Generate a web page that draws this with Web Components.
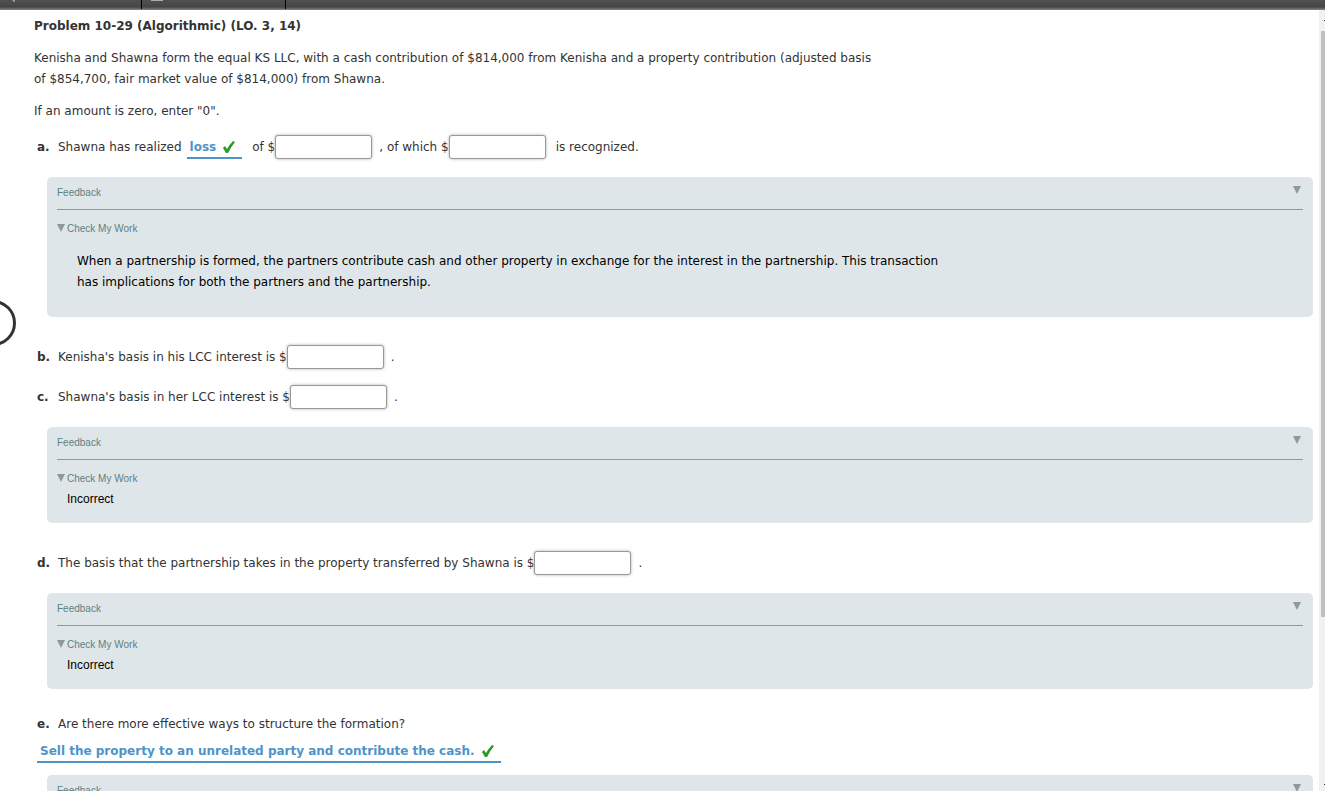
<!DOCTYPE html>
<html lang="en">
<head>
<meta charset="utf-8">
<title>Problem 10-29</title>
<style>
html, body { margin: 0; height: 100%; overflow: hidden; background: #fff; }
</style>
</head>
<body>
<problem-page></problem-page>
<script>
const define = (name, html, setup) => {
  const template = document.createElement('template');
  template.innerHTML = html;
  customElements.define(name, class extends HTMLElement {
    constructor() {
      super();
      this.attachShadow({ mode: 'open' }).append(template.content.cloneNode(true));
    }
    connectedCallback() { if (setup) setup(this, this.shadowRoot); }
  });
};

define('tool-bar', `
<style>
:host { display: flex; height: 10px; background: linear-gradient(#505050 0, #454545 70%, #5c5c5c 80%, #858585 100%); }
div { box-sizing: border-box; height: 9px; border-right: 1px solid #000; }
.first { width: 142px; padding-left: 12px; }
.second { width: 144px; padding-left: 9px; }
svg { display: block; }
</style>
<div class="first"><svg width="4" height="3"><path d="M0 0H3V2H2L0 0" fill="#999"/></svg></div>
<div class="second"><svg width="12" height="1"><path d="M0 0H12V1H0Z" fill="#aaa"/></svg></div>`);

define('scroll-track', `
<style>
:host { display: flex; flex-direction: column; flex: none; width: 6px; background: #f1f1f1; overflow: hidden; }
.cap { height: 21px; flex: none; }
.thumb { height: 75%; margin-left: 2px; background: #c1c1c1; }
.gap { flex: 1; }
svg { display: block; margin-left: auto; }
</style>
<div class="cap"><svg width="1" height="11"><path d="M0 10H1V11H0Z" fill="#333"/></svg></div>
<div class="thumb"></div><div class="gap"></div>
<div><svg width="1" height="7"><path d="M0 0H1V1H0Z" fill="#333"/></svg></div>`);

define('side-handle', `
<style>
:host { position: absolute; left: -30px; top: 300px; }
button { display: block; box-sizing: border-box; width: 46px; height: 46px; padding: 0; border: 3px solid #333; border-radius: 50%; background: #fff; }
</style>
<button type="button" aria-label="Open side panel"></button>`);

define('money-field', `
<style>
:host { display: inline-flex; }
label { display: flex; align-items: center; }
input { box-sizing: border-box; width: 97px; height: 24px; margin: 0; padding: 0 4px; border: 1px solid #999; border-radius: 3px; background: #fff; box-shadow: 0 0 3px #aaa; font: inherit; }
</style>
<label>$<input type="text"></label>`);

define('graded-choice', `
<style>
:host { display: flex; }
button { display: flex; align-items: center; gap: 7px; box-sizing: border-box; height: 24px; margin: 0; padding: 2px 7px 0 3px; border: 0; border-bottom: 2px solid #4f93c9; background: none; color: #4f93c9; font: inherit; font-weight: bold; }
svg { display: block; }
</style>
<button type="button"><slot></slot><svg width="12" height="13" viewBox="0 0 12 13"><path d="M0 7L2 5L4 8Q7 3 10 0L12 1Q8 6 5 12H3Z" fill="#2c9a2c"/></svg></button>`);

define('question-row', `
<style>
:host { display: flex; align-items: center; height: 24px; margin-left: 3px; white-space: pre; }
b { min-width: 21px; }
</style>
<b></b><slot></slot>`, (el, root) => { root.querySelector('b').textContent = el.getAttribute('letter'); });

define('feedback-panel', `
<style>
:host { display: block; margin-left: 13px; padding: 0 10px; border-radius: 5px; background: #dfe6e9; color: #000; font: 12px/20px "Liberation Sans", Arial, sans-serif; }
header { display: flex; justify-content: space-between; box-sizing: border-box; height: 33px; padding-top: 9px; border-bottom: 1px solid #8f999b; }
.title, .check { color: #5f8080; font-size: 10px; line-height: 14px; }
button { display: flex; padding: 0 2px 0 0; border: 0; background: none; height: 8px; }
svg { display: block; }
.check { display: flex; gap: 2px; padding-top: 12px; }
.check button { padding: 0; margin-top: 2px; }
.body { margin-left: 10px; padding: 3px 0 14px; }
:host([wide]) .body { margin-left: 20px; padding: 15px 0 24px; font: 12px/21px "DejaVu Sans", Verdana, sans-serif; }
</style>
<header><span class="title">Feedback</span><button type="button" aria-label="Collapse feedback"><svg width="8" height="8"><path d="M0 0H8L4 8Z" fill="#8f999b"/></svg></button></header>
<div class="check"><button type="button" aria-label="Toggle Check My Work"><svg width="8" height="8"><path d="M0 0H8L4 8Z" fill="#8f999b"/></svg></button><span>Check My Work</span></div>
<div class="body"><slot></slot></div>`);

define('problem-page', `
<style>
:host { display: flex; flex-direction: column; height: 100%; overflow: hidden; position: relative; color: #333; font: 12px/21px "DejaVu Sans", Verdana, sans-serif; }
.view { display: flex; flex: 1; min-height: 0; }
main { flex: 1; min-width: 0; overflow: hidden; padding: 6px 6px 0 34px; }
h1 { margin: 0; font-size: 12px; line-height: 21px; }
p { margin: 11px 0 0; }
tool-bar { flex: none; }
question-row { margin-top: 16px; }
.a { margin-top: 13px; }
feedback-panel { margin-top: 18px; }
feedback-panel + question-row { margin-top: 28px; }
feedback-panel + .last { margin-top: 23px; }
.choice { margin: 3px 0 0 3px; }
.choice + feedback-panel { margin-top: 12px; }
.before { margin-left: 5px; }
.after { margin-left: 7px; }
.gap { margin-left: 10px; }
</style>
<tool-bar></tool-bar>
<div class="view">
<main>
<h1>Problem 10-29 (Algorithmic) (LO. 3, 14)</h1>
<p>Kenisha and Shawna form the equal KS LLC, with a cash contribution of $814,000 from Kenisha and a property contribution (adjusted basis<br>of $854,700, fair market value of $814,000) from Shawna.</p>
<p>If an amount is zero, enter "0".</p>
<question-row class="a" letter="a."><span>Shawna has realized</span><graded-choice class="before">loss</graded-choice><span class="gap">of </span><money-field></money-field><span class="after">, of which </span><money-field></money-field><span class="gap">is recognized.</span></question-row>
<feedback-panel wide>When a partnership is formed, the partners contribute cash and other property in exchange for the interest in the partnership. This transaction<br>has implications for both the partners and the partnership.</feedback-panel>
<question-row letter="b."><span>Kenisha's basis in his LCC interest is </span><money-field></money-field><span class="after">.</span></question-row>
<question-row letter="c."><span>Shawna's basis in her LCC interest is </span><money-field></money-field><span class="after">.</span></question-row>
<feedback-panel>Incorrect</feedback-panel>
<question-row letter="d."><span>The basis that the partnership takes in the property transferred by Shawna is </span><money-field></money-field><span class="after">.</span></question-row>
<feedback-panel>Incorrect</feedback-panel>
<question-row class="last" letter="e."><span>Are there more effective ways to structure the formation?</span></question-row>
<graded-choice class="choice">Sell the property to an unrelated party and contribute the cash.</graded-choice>
<feedback-panel>Incorrect</feedback-panel>
</main>
<scroll-track></scroll-track>
</div>
<side-handle></side-handle>`);
</script>
</body>
</html>
